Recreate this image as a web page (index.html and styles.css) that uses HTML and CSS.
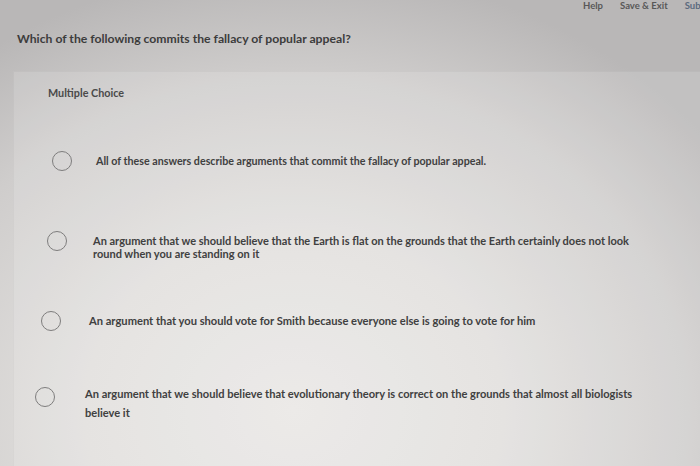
FILE: index.html
```html
<!DOCTYPE html>
<html lang="en">
<head>
<meta charset="utf-8">
<title>Multiple Choice</title>
<link rel="stylesheet" href="styles.css">
</head>
<body>
<div class="page">
  <header class="topbar">
    <nav class="toplinks">
      <a class="toplink">Help</a>
      <a class="toplink">Save &amp; Exit</a>
      <a class="toplink submit">Submit</a>
    </nav>
  </header>
  <h1 class="question">Which of the following commits the fallacy of popular appeal?</h1>
  <section class="panel">
    <div class="qtype">Multiple Choice</div>
    <ul class="options">
      <li class="option opt-1">
        <span class="radio"></span>
        <span class="label">All of these answers describe arguments that commit the fallacy of popular appeal.</span>
      </li>
      <li class="option opt-2">
        <span class="radio"></span>
        <span class="label">An argument that we should believe that the Earth is flat on the grounds that the Earth certainly does not look round when you are standing on it</span>
      </li>
      <li class="option opt-3">
        <span class="radio"></span>
        <span class="label">An argument that you should vote for Smith because everyone else is going to vote for him</span>
      </li>
      <li class="option opt-4">
        <span class="radio"></span>
        <span class="label">An argument that we should believe that evolutionary theory is correct on the grounds that almost all biologists believe it</span>
      </li>
    </ul>
  </section>
</div>
</body>
</html>
```
FILE: styles.css
```css
* { box-sizing: border-box; }
html, body {
  margin: 0;
  padding: 0;
  width: 700px;
  height: 466px;
  overflow: hidden;
}
body {
  font-family: "Lato", "Liberation Sans", sans-serif;
  color: #3a3a3a;
  background:
    radial-gradient(ellipse 75% 95% at 42% 88%, #e9e7e5 0%, #e1dfdd 40%, #cfcdcc 75%, #b9b7b7 100%);
}
.page {
  display: flex;
  flex-direction: column;
  height: 466px;
}
.topbar {
  height: 12px;
  display: flex;
  padding-left: 583px;
}
.toplinks {
  display: flex;
  gap: 17px;
  align-items: center;
  white-space: nowrap;
}
.toplink {
  font-size: 9.5px;
  font-weight: 700;
  line-height: 11px;
  color: #585858;
}
.submit { color: #5b6a7e; }
.question {
  margin: 20px 0 0 17px;
  font-size: 12.2px;
  line-height: 16px;
  font-weight: 700;
  color: #3c3c3c;
}
.panel {
  margin: 24px 0 0 13px;
  flex: 1;
  padding: 15px 0 0 34px;
  background: rgba(255, 255, 255, 0.14);
  border-top: 1px solid rgba(0, 0, 0, 0.03);
  border-left: 1px solid rgba(0, 0, 0, 0.03);
}
.qtype {
  font-size: 10.8px;
  font-weight: 700;
  line-height: 12px;
  color: #4a4a4a;
}
.options {
  list-style: none;
  margin: 55px 0 0 0;
  padding: 0;
}
.option {
  height: 80px;
  display: flex;
  align-items: flex-start;
  gap: 25px;
}
.radio {
  flex: none;
  width: 20px;
  height: 20px;
  margin-top: -3px;
  border: 1.5px solid #7e7d7d;
  border-radius: 50%;
}
.label {
  font-size: 10.7px;
  line-height: 13px;
  font-weight: 700;
  color: #404040;
  max-width: 555px;
}
.opt-1 { margin-left: 4px; gap: 24px; }
.opt-2 { margin-left: -1px; gap: 26px; }
.opt-2 .label { font-size: 11px; }
.opt-3 { margin-left: -7px; gap: 28px; }
.opt-3 .label { font-size: 11.15px; }
.opt-4 { margin-left: -13px; gap: 30px; }
.opt-4 .radio { margin-top: -7px; }
.opt-4 .label { font-size: 11.1px; line-height: 19px; margin-top: -10px; }
```
